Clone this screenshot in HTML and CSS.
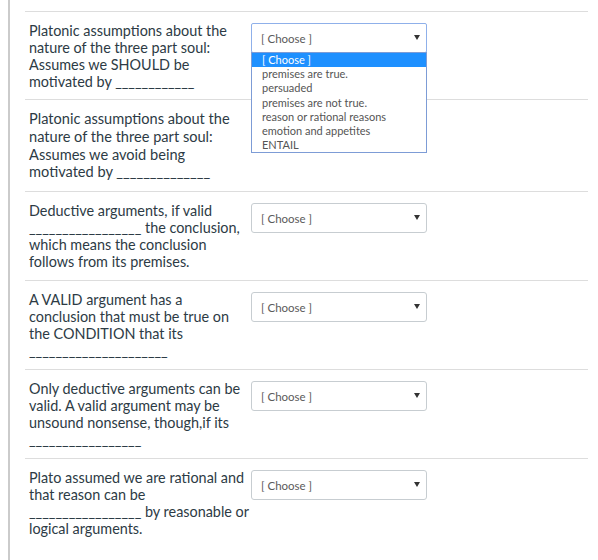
FILE: index.html
```html
<!DOCTYPE html>
<html>
<head>
<meta charset="utf-8">
<link rel="stylesheet" href="styles.css">
</head>
<body>
<div class="quiz">
  <div class="q q-first">
    <div class="q-text">Platonic assumptions about the nature of the three part soul: Assumes we SHOULD be motivated by ____________</div>
    <div class="select select-open">
      <span class="select-value">[ Choose ]</span>
      <svg class="arrow" width="6" height="5" viewBox="0 0 6 5"><polygon points="0,0 6,0 3,5" fill="#333"/></svg>
      <ul class="options">
        <li class="option option-active">[ Choose ]</li>
        <li class="option">premises are true.</li>
        <li class="option">persuaded</li>
        <li class="option">premises are not true.</li>
        <li class="option">reason or rational reasons</li>
        <li class="option">emotion and appetites</li>
        <li class="option">ENTAIL</li>
      </ul>
    </div>
  </div>
  <div class="q q-second">
    <div class="q-text">Platonic assumptions about the nature of the three part soul: Assumes we avoid being motivated by ______________</div>
  </div>
  <div class="q">
    <div class="q-text">Deductive arguments, if valid _________________ the conclusion, which means the conclusion follows from its premises.</div>
    <div class="select">
      <span class="select-value">[ Choose ]</span>
      <svg class="arrow" width="6" height="5" viewBox="0 0 6 5"><polygon points="0,0 6,0 3,5" fill="#333"/></svg>
    </div>
  </div>
  <div class="q">
    <div class="q-text">A VALID argument has a conclusion that must be true on the CONDITION that its _____________________</div>
    <div class="select">
      <span class="select-value">[ Choose ]</span>
      <svg class="arrow" width="6" height="5" viewBox="0 0 6 5"><polygon points="0,0 6,0 3,5" fill="#333"/></svg>
    </div>
  </div>
  <div class="q">
    <div class="q-text">Only deductive arguments can be valid. A valid argument may be unsound nonsense, though,if its _________________</div>
    <div class="select">
      <span class="select-value">[ Choose ]</span>
      <svg class="arrow" width="6" height="5" viewBox="0 0 6 5"><polygon points="0,0 6,0 3,5" fill="#333"/></svg>
    </div>
  </div>
  <div class="q">
    <div class="q-text">Plato assumed we are rational and that reason can be _________________ by reasonable or logical arguments.</div>
    <div class="select">
      <span class="select-value">[ Choose ]</span>
      <svg class="arrow" width="6" height="5" viewBox="0 0 6 5"><polygon points="0,0 6,0 3,5" fill="#333"/></svg>
    </div>
  </div>
</div>
</body>
</html>
```
FILE: styles.css
```css
html, body {
  margin: 0;
  padding: 0;
  background: #fff;
}

body {
  font-family: Lato, "Open Sans", sans-serif;
  color: #2d3b45;
}

.quiz {
  margin-left: 8px;
  border-left: 2px solid #cbcbcb;
  min-height: 560px;
  box-sizing: border-box;
  padding: 11px 0 0 15px;
}

.q {
  width: 563px;
  box-sizing: border-box;
  display: flex;
  align-items: flex-start;
  border-top: 1px solid #dddddd;
  padding: 10px 0 10px 4px;
}

.q-first {
  padding-bottom: 9px;
}

.q-text {
  width: 220px;
  margin-right: 2px;
  font-size: 14.4px;
  line-height: 17px;
}

.q-second .q-text {
  font-size: 14.6px;
  line-height: 17.75px;
}

.select {
  position: relative;
  width: 176px;
  height: 30px;
  margin-top: 1px;
  box-sizing: border-box;
  border: 1px solid #c7cdd1;
  border-radius: 3px;
  display: flex;
  align-items: center;
  justify-content: space-between;
  padding: 0 6px 0 9px;
  background: #fff;
}

.select-open {
  border-color: #8fb0ea;
  border-radius: 2px;
}

.select-value {
  font-size: 11.5px;
  color: #5a5a5a;
}

.arrow {
  display: block;
  margin-top: -2px;
}

.options {
  position: absolute;
  top: 100%;
  left: -1px;
  right: -1px;
  margin: 0;
  padding: 0;
  list-style: none;
  background: #fff;
  border: 1px solid #7d9cd6;
  z-index: 2;
}

.option {
  font-size: 11px;
  line-height: 14.2px;
  padding-left: 10px;
  color: #555;
}

.option-active {
  background: #1e90ff;
  color: #fff;
}
```
